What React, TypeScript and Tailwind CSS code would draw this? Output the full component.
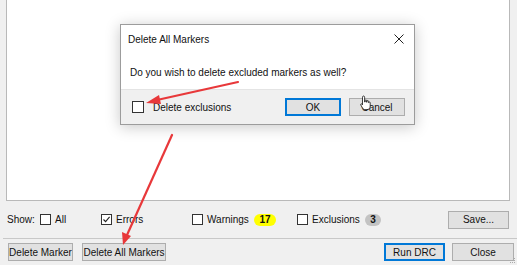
import React from 'react';

const Check = ({ checked = false }: { checked?: boolean }) => (
  <span className="inline-flex w-[11px] h-[11px] border border-[#333] bg-white items-center justify-center shrink-0">
    {checked && (
      <svg width="9" height="9" viewBox="0 0 9 9">
        <path d="M1.5 4.5 L3.6 6.7 L7.6 1.8" fill="none" stroke="#222" strokeWidth="1.1" />
      </svg>
    )}
  </span>
);

const Btn = ({ label, w, focus = false }: { label: string; w: string; focus?: boolean }) => (
  <button
    className={`${w} h-[18px] shrink-0 whitespace-nowrap flex items-center justify-center bg-[#e1e1e1] text-[#111] ${
      focus ? 'border-2 border-[#0078d7]' : 'border border-[#adadad]'
    }`}
  >
    {label}
  </button>
);

export default function App() {
  return (
    <div
      className="relative w-[517px] h-[265px] overflow-hidden bg-[#f0f0f0] text-[10px] text-[#111]"
      style={{ fontFamily: '"Liberation Sans", Arial, sans-serif' }}
    >
      {/* marker list */}
      <div className="ml-[6px] mr-[7px] h-[201px] bg-white border border-t-0 border-[#b9b9b9]" />

      {/* show filters */}
      <div className="flex items-center h-[37px] pl-[7px] pr-[8px]">
        <span className="w-[33px]">Show:</span>
        <label className="flex items-center gap-[4px] w-[61px]">
          <Check />
          <span>All</span>
        </label>
        <label className="flex items-center gap-[4px] w-[91px]">
          <Check checked />
          <span>Errors</span>
        </label>
        <label className="flex items-center gap-[4px] w-[62px]">
          <Check />
          <span>Warnings</span>
        </label>
        <span className="h-[12px] w-[22px] rounded-full bg-[#ffff00] flex items-center justify-center font-bold">
          17
        </span>
        <label className="flex items-center gap-[4px] ml-[21px] w-[68px]">
          <Check />
          <span>Exclusions</span>
        </label>
        <span className="h-[12px] w-[16px] rounded-full bg-[#c3c3c3] flex items-center justify-center font-bold">
          3
        </span>
        <div className="ml-auto">
          <Btn label="Save..." w="w-[61px]" />
        </div>
      </div>

      {/* separator */}
      <div className="ml-[3px] border-t border-[#c8c8c8]" />

      {/* action buttons */}
      <div className="flex items-center gap-[9px] pl-[8px] pr-[3px] pt-[4px]">
        <Btn label="Delete Marker" w="w-[65px]" />
        <Btn label="Delete All Markers" w="w-[84px]" />
        <div className="ml-auto flex gap-[7px]">
          <Btn label="Run DRC" w="w-[61px]" focus />
          <Btn label="Close" w="w-[62px]" />
        </div>
      </div>

      {/* size grip */}
      <svg className="absolute right-[1px] bottom-[1px]" width="6" height="6" viewBox="0 0 6 6">
        <rect x="4" y="0" width="1" height="1" fill="#aaa" />
        <rect x="2" y="2" width="1" height="1" fill="#aaa" />
        <rect x="4" y="2" width="1" height="1" fill="#aaa" />
        <rect x="0" y="4" width="1" height="1" fill="#aaa" />
        <rect x="2" y="4" width="1" height="1" fill="#aaa" />
        <rect x="4" y="4" width="1" height="1" fill="#aaa" />
      </svg>

      {/* confirmation dialog */}
      <div className="absolute left-[120px] top-[24px] w-[295px] h-[101px] bg-white border border-[#9c9c9c] shadow-[0_2px_14px_rgba(0,0,0,0.22)] flex flex-col">
        <div className="flex items-center justify-between h-[28px] pl-[7px] pr-[10px]">
          <span>Delete All Markers</span>
          <svg width="10" height="10" viewBox="0 0 10 10">
            <path d="M0.5 0.5 L9.5 9.5 M9.5 0.5 L0.5 9.5" stroke="#222" strokeWidth="1" />
          </svg>
        </div>
        <div className="h-[36px] pl-[9px] pt-[12px]">Do you wish to delete excluded markers as well?</div>
        <div className="flex-1 bg-[#f0f0f0] border-t border-[#e4e4e4] flex items-center pl-[11px] pr-[9px]">
          <label className="flex items-center gap-[9px]">
            <span className="w-[12px] h-[12px] border border-[#333] bg-white" />
            <span>Delete exclusions</span>
          </label>
          <div className="ml-auto flex gap-[8px]">
            <Btn label="OK" w="w-[56px]" focus />
            <Btn label="Cancel" w="w-[56px]" />
          </div>
        </div>
      </div>

      {/* hand cursor over Cancel */}
      <svg className="absolute left-[360px] top-[95px]" width="12" height="16" viewBox="0 0 12 16">
        <path
          d="M3.5 1 C4.3 1 4.6 1.6 4.6 2.2 L4.6 7 L5.2 7 L5.2 5.6 C5.2 4.6 6.6 4.6 6.6 5.6 L6.6 7.2 L7 7.2 L7 6.2 C7 5.3 8.4 5.3 8.4 6.2 L8.4 7.6 L8.8 7.6 C8.8 6.8 10.2 6.8 10.2 7.6 L10.2 11 C10.2 13 9 14.6 7 14.6 L5 14.6 C3.8 14.6 3 13.8 2.4 12.8 L0.8 10 C0.3 9.2 1.3 8.4 2 9.1 L2.5 9.8 L2.5 2.2 C2.5 1.6 2.8 1 3.5 1 Z"
          fill="#fff"
          stroke="#111"
          strokeWidth="0.8"
        />
      </svg>

      {/* red annotation arrows */}
      <svg className="absolute inset-0 pointer-events-none" width="517" height="265" viewBox="0 0 517 265">
        <line x1="238" y1="82" x2="157" y2="100" stroke="#e8383a" strokeWidth="2.2" strokeLinecap="round" />
        <polygon points="146,103 159,95 161,104" fill="#e8383a" />
        <line x1="172" y1="135" x2="127" y2="235" stroke="#e8383a" strokeWidth="2.2" strokeLinecap="round" />
        <polygon points="123,245 122,232 131,236" fill="#e8383a" />
      </svg>
    </div>
  );
}
